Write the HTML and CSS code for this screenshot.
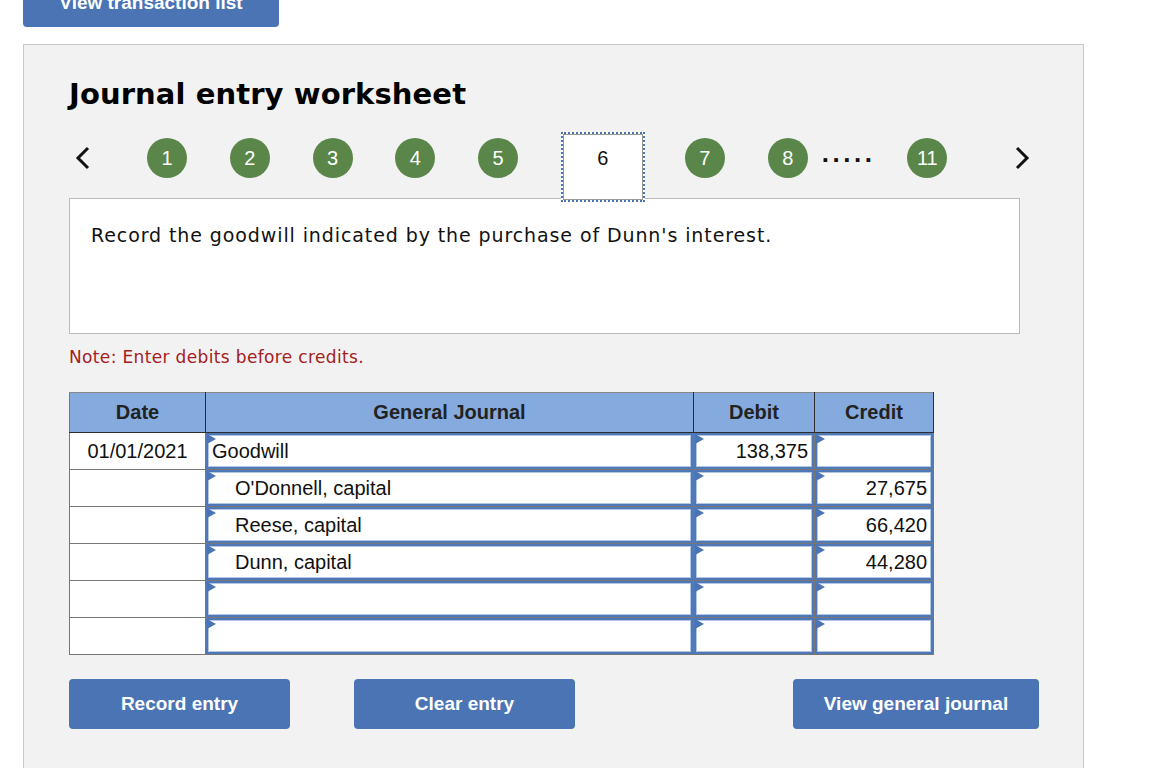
FILE: index.html
```html
<!doctype html>
<html>
<head>
  <title>Journal entry worksheet</title>
  <link rel="stylesheet" href="styles.css">
</head>
<body>
  <div class="page">
    <button class="btn btn-top">View transaction list</button>

    <section class="panel">
      <h1>Journal entry worksheet</h1>

      <!-- step navigation -->
      <nav class="steps">
        <span class="arrow arrow-prev">
          <svg width="16" height="24" viewBox="0 0 16 24"><path d="M13 2 L3 12 L13 22" fill="none" stroke="#111" stroke-width="3"/></svg>
        </span>
        <span class="step step-first">1</span>
        <span class="step">2</span>
        <span class="step">3</span>
        <span class="step">4</span>
        <span class="step">5</span>
        <span class="current">6</span>
        <span class="step step-seven">7</span>
        <span class="step step-eight">8</span>
        <span class="dots">.....</span>
        <span class="step step-last">11</span>
        <span class="arrow arrow-next">
          <svg width="16" height="24" viewBox="0 0 16 24"><path d="M3 2 L13 12 L3 22" fill="none" stroke="#111" stroke-width="3"/></svg>
        </span>
      </nav>

      <div class="question">Record the goodwill indicated by the purchase of Dunn's interest.</div>

      <p class="note">Note: Enter debits before credits.</p>

      <table class="journal">
        <colgroup>
          <col class="c-date">
          <col class="c-acct">
          <col class="c-debit">
          <col class="c-credit">
        </colgroup>
        <thead>
          <tr>
            <th>Date</th>
            <th>General Journal</th>
            <th>Debit</th>
            <th>Credit</th>
          </tr>
        </thead>
        <tbody>
          <tr>
            <td class="date">01/01/2021</td>
            <td class="in"><div class="field acct">Goodwill</div></td>
            <td class="in"><div class="field num">138,375</div></td>
            <td class="in"><div class="field num"></div></td>
          </tr>
          <tr>
            <td class="date"></td>
            <td class="in"><div class="field acct indent">O'Donnell, capital</div></td>
            <td class="in"><div class="field num"></div></td>
            <td class="in"><div class="field num">27,675</div></td>
          </tr>
          <tr>
            <td class="date"></td>
            <td class="in"><div class="field acct indent">Reese, capital</div></td>
            <td class="in"><div class="field num"></div></td>
            <td class="in"><div class="field num">66,420</div></td>
          </tr>
          <tr>
            <td class="date"></td>
            <td class="in"><div class="field acct indent">Dunn, capital</div></td>
            <td class="in"><div class="field num"></div></td>
            <td class="in"><div class="field num">44,280</div></td>
          </tr>
          <tr>
            <td class="date"></td>
            <td class="in"><div class="field acct"></div></td>
            <td class="in"><div class="field num"></div></td>
            <td class="in"><div class="field num"></div></td>
          </tr>
          <tr>
            <td class="date"></td>
            <td class="in"><div class="field acct"></div></td>
            <td class="in"><div class="field num"></div></td>
            <td class="in"><div class="field num"></div></td>
          </tr>
        </tbody>
      </table>

      <div class="actions">
        <button class="btn btn-record">Record entry</button>
        <button class="btn btn-clear">Clear entry</button>
        <button class="btn btn-view">View general journal</button>
      </div>
    </section>
  </div>
</body>
</html>
```

FILE: styles.css
```css
* {
  box-sizing: border-box;
  margin: 0;
  padding: 0;
}

html, body {
  height: 100%;
  overflow: hidden;
}

body {
  background: #fff;
  font-family: "Liberation Sans", Arial, sans-serif;
  color: #111;
}

.page {
  padding-left: 23px;
}

.btn {
  border: none;
  background: #4a74b4;
  color: #fff;
  font-family: "Liberation Sans", Arial, sans-serif;
  font-weight: 700;
  font-size: 19px;
  border-radius: 4px;
  cursor: pointer;
}

.btn-top {
  display: block;
  width: 256px;
  height: 40px;
  margin-top: -13px;
  padding-bottom: 8px;
  line-height: 18px;
}

.panel {
  margin-top: 17px;
  width: 1061px;
  height: 760px;
  background: #f2f2f2;
  border: 1px solid #c8c8c8;
  padding: 32px 0 0 45px;
}

h1 {
  font-family: "DejaVu Sans", Verdana, sans-serif;
  font-weight: 700;
  font-size: 29px;
  line-height: 34px;
  letter-spacing: 0.1px;
  color: #000;
}

/* step navigation */
.steps {
  display: flex;
  align-items: flex-start;
  margin-top: 21px;
  height: 66px;
}

.arrow {
  width: 28px;
  height: 24px;
  margin-top: 14px;
  display: flex;
  justify-content: center;
}

.arrow-next {
  margin-left: 61px;
}

.step {
  width: 40px;
  height: 40px;
  border-radius: 50%;
  background: #5a8649;
  color: #fff;
  font-size: 20px;
  line-height: 40px;
  text-align: center;
  margin-top: 6px;
  margin-left: 42.75px;
}

.step-first { margin-left: 50px; }
.step-seven { margin-left: 40px; }
.step-eight { margin-left: 43px; }
.step-last { margin-left: 32px; }

.current {
  width: 84px;
  height: 70px;
  margin-left: 42.75px;
  background: #fff;
  border: 2px dotted #4a74b4;
  box-shadow: inset 0 0 0 1px #999;
  text-align: center;
  font-size: 20px;
  line-height: 24px;
  padding-top: 12px;
  position: relative;
  z-index: 1;
}

.dots {
  margin-left: 14px;
  margin-top: 6px;
  font-size: 26px;
  font-weight: 700;
  line-height: 30px;
  letter-spacing: 3.5px;
  white-space: nowrap;
}

.question {
  width: 951px;
  height: 136px;
  background: #fff;
  border: 1px solid #bbb;
  padding: 25px 0 0 21px;
  font-family: "DejaVu Sans", Verdana, sans-serif;
  font-size: 19px;
  line-height: 22px;
  letter-spacing: 0.9px;
  color: #111;
}

.note {
  margin-top: 12px;
  font-family: "DejaVu Sans", Verdana, sans-serif;
  font-size: 17px;
  line-height: 22px;
  letter-spacing: 0.35px;
  color: #a52020;
}

/* journal table */
.journal {
  margin-top: 24px;
  border-collapse: collapse;
  table-layout: fixed;
  width: 864px;
  background: #fff;
  font-size: 20px;
}

.c-date { width: 136px; }
.c-acct { width: 488px; }
.c-debit { width: 121px; }
.c-credit { width: 119px; }

.journal th {
  height: 40px;
  background: #84aade;
  border: 1px solid #2d2d2d;
  border-top-color: #888;
  font-weight: 700;
  color: #222;
}

.journal th:first-child {
  border-left-color: #777;
}

.journal td {
  height: 37px;
  border: 1px solid #777;
  padding: 0;
}

.journal td.date {
  text-align: center;
}

.field {
  position: relative;
  height: 36px;
  border: 2px solid #4e78b8;
  box-shadow: inset 0 0 0 1px #b3c6e6;
  line-height: 32px;
  padding: 0 4px;
}

.field::before {
  content: "";
  position: absolute;
  left: -1px;
  top: -1px;
  border-left: 9px solid #4a74b4;
  border-top: 5px solid transparent;
  border-bottom: 5px solid transparent;
}

.acct {
  text-align: left;
}

.indent {
  padding-left: 27px;
}

.num {
  text-align: right;
}

.actions {
  display: flex;
  margin-top: 24px;
}

.actions .btn {
  height: 50px;
}

.btn-record,
.btn-clear {
  width: 221px;
}

.btn-clear {
  margin-left: 64px;
}

.btn-view {
  width: 246px;
  margin-left: 218px;
}
```
